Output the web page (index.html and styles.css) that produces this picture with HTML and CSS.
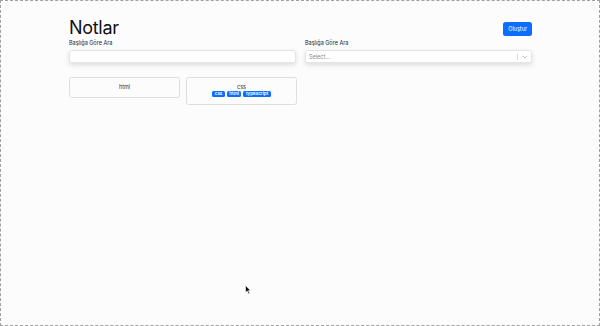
FILE: index.html
```html
<!DOCTYPE html>
<html lang="tr">
<head>
<meta charset="utf-8">
<title>Notlar</title>
<link rel="stylesheet" href="styles.css">
</head>
<body>
<div class="frame">
  <div class="container">
    <div class="header">
      <h1 class="title">Notlar</h1>
      <button class="btn-primary">Oluştur</button>
    </div>
    <div class="filters">
      <div class="field">
        <label class="label">Başlığa Göre Ara</label>
        <div class="input"></div>
      </div>
      <div class="field">
        <label class="label">Başlığa Göre Ara</label>
        <div class="input select">
          <span class="placeholder">Select...</span>
          <span class="indicators">
            <span class="sep"></span>
            <svg class="chev" width="6" height="4" viewBox="0 0 6 4"><path d="M0.8 0.8 L3 3 L5.2 0.8" fill="none" stroke="#b3b3b3" stroke-width="0.8"/></svg>
          </span>
        </div>
      </div>
    </div>
    <div class="cards">
      <div class="card card-short">
        <div class="card-title">html</div>
      </div>
      <div class="card card-tags">
        <div class="card-title">css</div>
        <div class="tags">
          <span class="tag">css</span>
          <span class="tag">html</span>
          <span class="tag">typescript</span>
        </div>
      </div>
    </div>
  </div>
  <svg class="cursor" width="7" height="10" viewBox="0 0 7 10"><path d="M0.5 0.5 L0.5 7.5 L2.2 6 L3.4 8.8 L4.6 8.3 L3.4 5.6 L5.6 5.6 Z" fill="#111" stroke="#fff" stroke-width="0.6"/></svg>
</div>
</body>
</html>
```
FILE: styles.css
```css
html, body {
  margin: 0;
  padding: 0;
}
body {
  font-family: Inter, "Liberation Sans", sans-serif;
  color: #212529;
}
.frame {
  position: relative;
  width: 600px;
  height: 326px;
  box-sizing: border-box;
  border: 1px dashed #a0a0a0;
  background: #fcfcfc;
  overflow: hidden;
}
.container {
  width: 463px;
  margin-left: 68px;
  padding-top: 18px;
}
.header {
  display: flex;
  justify-content: space-between;
  align-items: center;
}
.title {
  margin: 0;
  font-size: 18px;
  font-weight: 400;
  line-height: 18px;
  letter-spacing: -0.3px;
  color: #111;
}
.btn-primary {
  background: #0d6efd;
  color: #fff;
  border: none;
  border-radius: 2.5px;
  font-family: inherit;
  font-size: 5.5px;
  padding: 0 5px;
  height: 14px;
  margin-top: 2px;
}
.filters {
  display: grid;
  grid-template-columns: 1fr 1fr;
  gap: 9px;
  margin-top: 3px;
}
.field {
  display: flex;
  flex-direction: column;
}
.label {
  font-size: 5.5px;
  line-height: 6px;
  margin-bottom: 4px;
}
.input {
  height: 13px;
  box-sizing: border-box;
  background: #fff;
  border: 1px solid #e4e4e4;
  border-radius: 2.5px;
  box-shadow: 0 2px 5px rgba(0,0,0,0.13);
}
.select {
  display: flex;
  align-items: center;
  justify-content: space-between;
  padding-left: 3px;
}
.placeholder {
  font-size: 5.5px;
  color: #8a8a8a;
}
.indicators {
  display: flex;
  align-items: center;
  height: 100%;
}
.sep {
  width: 1px;
  height: 6px;
  background: #d9d9d9;
  margin-right: 4px;
}
.chev {
  margin-right: 3px;
}
.cards {
  display: grid;
  grid-template-columns: 111px 111px;
  gap: 6px;
  margin-top: 14px;
  align-items: start;
}
.card {
  box-sizing: border-box;
  border: 1px solid #dedede;
  border-radius: 2.5px;
  background: #fcfcfc;
  padding: 6px 4px 5px;
  text-align: center;
}
.card-short {
  height: 21px;
}
.card-tags {
  height: 28px;
}
.card-title {
  font-size: 5.5px;
  line-height: 7px;
  color: #333;
}
.tags {
  display: flex;
  justify-content: center;
  gap: 2px;
}
.tag {
  background: #0d6efd;
  color: #fff;
  font-size: 4.5px;
  font-weight: 600;
  line-height: 6px;
  padding: 0 2.5px;
  border-radius: 1.5px;
}
.cursor {
  position: absolute;
  left: 244px;
  top: 284px;
}
```
